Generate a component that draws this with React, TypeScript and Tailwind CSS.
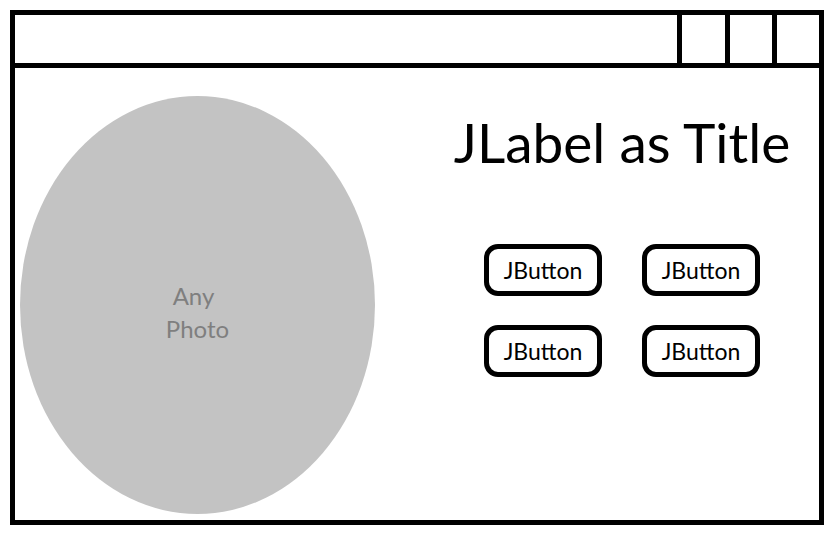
const font = "font-['Lato','Liberation_Sans',sans-serif]";

function TitleBar() {
  return (
    <div className="flex h-[53px] justify-end border-b-[5px] border-black">
      <div className="w-[48px] border-l-[5px] border-black" />
      <div className="w-[47px] border-l-[5px] border-black" />
      <div className="w-[47px] border-l-[5px] border-black" />
    </div>
  );
}

function MockButton({ label }: { label: string }) {
  return (
    <div className="flex h-[52px] w-[118px] items-center justify-center rounded-[14px] border-[5px] border-black text-[23px] text-black">
      {label}
    </div>
  );
}

export default function App() {
  return (
    <div className={`h-[537px] w-[838px] bg-white pl-[10px] pt-[10px] ${font}`}>
      <div className="flex h-[515px] w-[814px] flex-col border-[5px] border-black">
        <TitleBar />

        <div className="flex flex-1">
          {/* photo placeholder */}
          <div className="ml-[5px] mt-[28px] flex h-[418px] w-[355px] flex-col items-center justify-center rounded-[50%] bg-[#c3c3c3] pt-[14px] text-[24px] leading-[33px] text-[#7f7f7f]">
            <span className="pr-[8px]">Any</span>
            <span>Photo</span>
          </div>

          {/* right side */}
          <div className="ml-[50px] flex w-[394px] flex-col items-center">
            <h1 className="mt-[46px] text-[55px] font-normal leading-[56px] text-black">
              JLabel as Title
            </h1>
            <div className="mt-[74px] grid grid-cols-2 gap-x-[40px] gap-y-[29px]">
              <MockButton label="JButton" />
              <MockButton label="JButton" />
              <MockButton label="JButton" />
              <MockButton label="JButton" />
            </div>
          </div>
        </div>
      </div>
    </div>
  );
}
